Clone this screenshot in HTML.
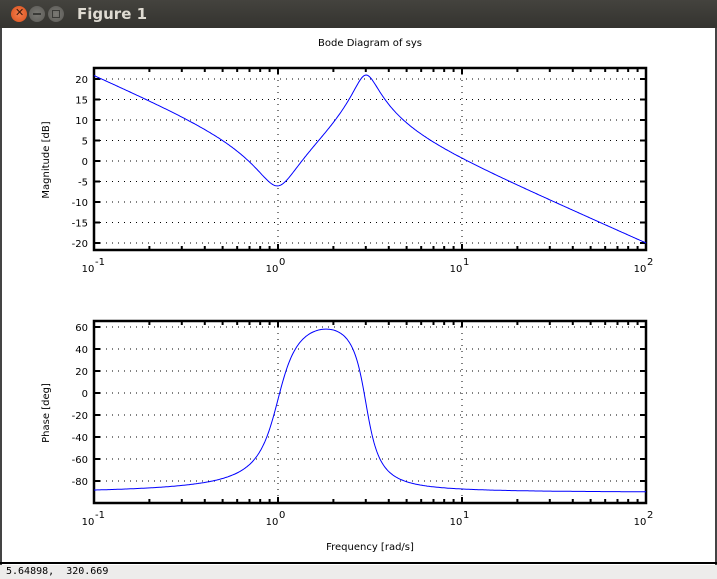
<!DOCTYPE html>
<html><head><meta charset="utf-8"><style>
html,body{margin:0;padding:0;width:717px;height:579px;overflow:hidden;background:#fff;font-family:"DejaVu Sans","Liberation Sans",sans-serif}
#tb{position:absolute;left:0;top:0;width:717px;height:28px;background:linear-gradient(#44433e,#34332f);}
.b{position:absolute;top:6px;width:16px;height:16px;border-radius:50%}
#tt{position:absolute;left:77px;top:5px;color:#dfdbd2;font-weight:bold;font-size:15px}
#sb{position:absolute;left:0;top:565px;width:717px;height:14px;background:#edeceb;font-family:"DejaVu Sans Mono","Liberation Mono",monospace;font-size:10px;line-height:14px;padding-left:6px}
svg{position:absolute;left:0;top:0}
svg text{font-family:"DejaVu Sans","Liberation Sans",sans-serif;font-size:10px}
</style></head><body>
<div id="tb">
<div class="b" style="left:11px;background:radial-gradient(#f47e4d,#d9501c)"><span style="position:absolute;left:4px;top:0;font-size:11px;color:#3a1a0c">✕</span></div>
<div class="b" style="left:29px;background:radial-gradient(#7a7974,#5a5955)"><span style="position:absolute;left:4px;top:7px;width:8px;height:2px;background:#3a3a37"></span></div>
<div class="b" style="left:48px;background:radial-gradient(#7a7974,#5a5955)"><span style="position:absolute;left:4px;top:4px;width:6px;height:6px;border:1px solid #3a3a37"></span></div>
<div id="tt">Figure 1</div>
</div>
<svg id="s" width="717" height="565" viewBox="0 0 717 565">
<rect x="0" y="28" width="2" height="537" fill="#444"/>
<rect x="715" y="28" width="2" height="537" fill="#444"/>
<rect x="0" y="562" width="717" height="2" fill="#000"/>
<text x="370" y="46" text-anchor="middle">Bode Diagram of sys</text>
<text transform="translate(49,160) rotate(-90)" text-anchor="middle">Magnitude [dB]</text>
<text transform="translate(49,413) rotate(-90)" text-anchor="middle">Phase [deg]</text>
<text x="370" y="550" text-anchor="middle">Frequency [rad/s]</text>
<g id="g"></g>
</svg>
<div id="sb">5.64898,&nbsp; 320.669</div>
<script>
var g=document.getElementById('g'),h='';
var X0=94,X1=646,D=184;
function fx(w){return X0+(Math.log10(w)+1)*D;}
function axes(top,bot,ticks,fy,ph){
 ticks.forEach(function(v){var y=fy(v);
  h+='<line x1="'+X0+'" x2="'+X1+'" y1="'+y+'" y2="'+y+'" stroke="#000" stroke-dasharray="1 5"/>';
  h+='<line x1="'+X0+'" x2="'+(X0+6)+'" y1="'+y+'" y2="'+y+'" stroke="#000" stroke-width="2"/>';
  h+='<line x1="'+(X1-6)+'" x2="'+X1+'" y1="'+y+'" y2="'+y+'" stroke="#000" stroke-width="2"/>';
  h+='<text x="'+(X0-6)+'" y="'+(y+4)+'" text-anchor="end">'+v+'</text>';});
 for(var d=-1;d<2;d++)for(var k=1;k<10;k++){var x=fx(k*Math.pow(10,d));var L=k==1?6:4;
  if(k==1&&d>-1)h+='<line x1="'+x+'" x2="'+x+'" y1="'+top+'" y2="'+bot+'" stroke="#000" stroke-dasharray="1 5"/>';
  h+='<line x1="'+x+'" x2="'+x+'" y1="'+top+'" y2="'+(top+L)+'" stroke="#000" stroke-width="2"/><line x1="'+x+'" x2="'+x+'" y1="'+(bot-L)+'" y2="'+bot+'" stroke="#000" stroke-width="2"/>';}
 ['-1','0','1','2'].forEach(function(e,i){var x=X0+i*D;
  h+='<text x="'+(x-6)+'" y="'+(bot+22)+'" text-anchor="middle" font-size="11">10</text><text x="'+(x+1)+'" y="'+(bot+15)+'" font-size="11">'+e+'</text>';});
 h+='<rect x="'+X0+'" y="'+top+'" width="'+(X1-X0)+'" height="'+(bot-top)+'" fill="none" stroke="#000" stroke-width="2.5"/>';
}
var fm=function(v){return 79+(20-v)*4.1;},fp=function(v){return 327+(60-v)*1.1;};
axes(68,250,[20,15,10,5,0,-5,-10,-15,-20],fm);
axes(321,503,[60,40,20,0,-20,-40,-60,-80],fp);
var pm='',pp='';
for(var i=0;i<=552;i++){var w=Math.pow(10,-1+i/D);
 var nr=1-w*w,ni=0.4*w,dr=-0.268*3*w*w,di=w*(9-w*w);
 var m=10*Math.hypot(nr,ni)/Math.hypot(dr,di);
 var p=(Math.atan2(ni,nr)-Math.atan2(di,dr))*180/Math.PI;
 while(p>180)p-=360;while(p<-180)p+=360;
 pm+=(i?'L':'M')+(X0+i)+' '+fm(20*Math.log10(m)).toFixed(1);
 pp+=(i?'L':'M')+(X0+i)+' '+fp(p).toFixed(1);}
h+='<path d="'+pm+'" fill="none" stroke="#00f"/><path d="'+pp+'" fill="none" stroke="#00f"/>';
g.innerHTML=h;
</script>
</body></html>
